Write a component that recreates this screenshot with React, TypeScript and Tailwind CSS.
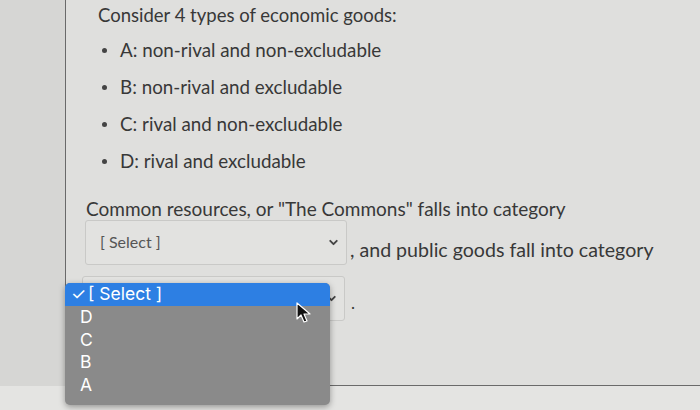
import { ChevronDown } from "lucide-react";

const goods = [
  "A: non-rival and non-excludable",
  "B: non-rival and excludable",
  "C: rival and non-excludable",
  "D: rival and excludable",
];

function Select({ className = "", label = true }: { className?: string; label?: boolean }) {
  return (
    <div
      className={`w-[262px] h-[45px] border border-[#c9c9c7] rounded-[3px] bg-[#e2e2e0] flex items-center justify-between pl-[14px] pr-[6px] ${className}`}
    >
      <span className="text-[16px] text-[#555] -mt-[2px]">{label ? "[ Select ]" : ""}</span>
      <ChevronDown size={13} strokeWidth={3.5} className="text-[#444]" />
    </div>
  );
}

export default function App() {
  return (
    <div
      className="relative w-[700px] h-[410px] overflow-hidden bg-[#e4e4e2] text-[#383838]"
      style={{ fontFamily: "Lato, 'Open Sans', sans-serif" }}
    >
      <div className="flex h-[386px]">
        <div className="w-[66px] bg-[#d6d6d4] border-r border-[#6a6a6a]" />
        <div className="flex-1 pt-[4px] bg-[#dfdfdd] border-b border-[#6a6a6a]">
          <p className="ml-[32px] text-[18.5px] leading-[22px]">
            Consider 4 types of economic goods:
          </p>
          <ul className="mt-[6px] ml-[36px]">
            {goods.map((g) => (
              <li key={g} className="h-[37px] flex items-center text-[18.8px]">
                <span className="w-[5px] h-[5px] rounded-full bg-[#444] mr-[13px]" />
                {g}
              </li>
            ))}
          </ul>
          <p className="mt-[18px] ml-[20px] text-[19px] leading-[22px]">
            Common resources, or "The Commons" falls into category
          </p>
          <div className="ml-[19px] flex items-end">
            <Select />
            <span className="ml-[3px] pb-[1px] text-[19.6px]">
              , and public goods fall into category
            </span>
          </div>
          <div className="mt-[11px] ml-[16px] flex items-end">
            {/* label is hidden under the open menu */}
            <Select className="w-[263px]" label={false} />
            <span className="ml-[6px] pb-[6px] text-[17px]">.</span>
          </div>
        </div>
      </div>

      {/* native dropdown menu */}
      <div
        className="absolute left-[65px] top-[283px] w-[265px] h-[122px] rounded-[5px] bg-[#8a8a8a] shadow-[0_2px_6px_rgba(0,0,0,0.35)] overflow-hidden text-white text-[17.5px]"
        style={{ fontFamily: "Inter, 'Liberation Sans', sans-serif" }}
      >
        <div className="h-[23px] bg-[#2d7fe3] flex items-center pl-[6px]">
          <span className="w-[17px] text-[17px] leading-none">✓</span>
          <span>[ Select ]</span>
        </div>
        {["D", "C", "B", "A"].map((o) => (
          <div key={o} className="h-[22.5px] flex items-center pl-[15px]">
            {o}
          </div>
        ))}
      </div>

      {/* mouse cursor */}
      <svg
        className="absolute left-[296px] top-[302px]"
        width="16"
        height="22"
        viewBox="0 0 16 22"
      >
        <path
          d="M1 1 L1 17 L5 13 L8 20 L11 19 L8 12 L14 12 Z"
          fill="#111"
          stroke="#fff"
          strokeWidth="1.2"
          strokeLinejoin="round"
        />
      </svg>
    </div>
  );
}
